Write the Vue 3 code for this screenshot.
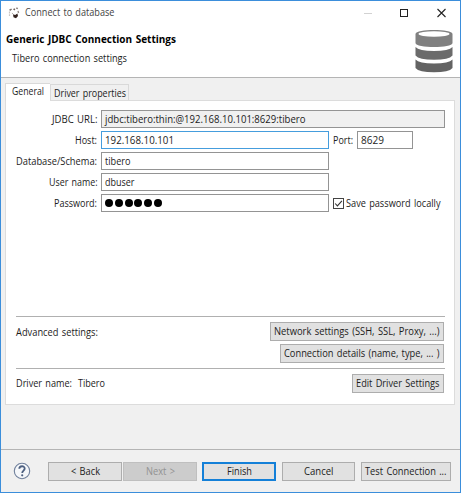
<script setup>
import { h, ref } from 'vue'

const url = 'jdbc:tibero:thin:@192.168.10.101:8629:tibero'
const host = '192.168.10.101'
const port = '8629'
const tab = ref('General')
const dots = 6

// Text label fitted to a fixed width; the baseline sits 11px below its top edge.
const Fit = (props) =>
  h('svg', { width: props.w, height: 15, class: 'fit' }, [
    h('text', { x: 0, y: 11, textLength: props.w, lengthAdjust: 'spacingAndGlyphs' }, props.t)
  ])
Fit.props = ['w', 't']
</script>

<template>
  <div class="window">
    <header class="head">
      <div class="titlebar">
        <svg class="app-icon" width="12" height="12" viewBox="0 0 12 12">
          <path d="M1.500 9V4.200" fill="none" stroke="#c9c4c2" stroke-width="1.200" stroke-dasharray="1.800 .8" />
          <path d="M1 2.800 3.200 1.600 4 2.400 2.200 4Z" fill="#7b706c" />
          <path d="M5 2.300 6.200 1.200 7.400 2.200 6.500 3.600Z" fill="#6a5d59" />
          <path d="M8 1.200 10 1.500M10 3.800 10.600 6" fill="none" stroke="#958a86" stroke-width="1.300" />
          <path d="M5 7.200 7.200 8 9.400 6.500 10 9 8 11.200 5.500 10.200Z" fill="#33221e" />
          <path d="M3.800 5.800 5 6.200 4.200 7.200Z" fill="#8d827e" />
        </svg>
        <Fit class="title" :w="89.5" t="Connect to database" />
        <svg class="controls" width="84" height="12" viewBox="0 0 84 12">
          <path d="M0 6.500H8" stroke="#d2d2d2" />
          <rect x="36.500" y="2.500" width="7" height="7" fill="none" stroke="#222" />
          <path d="M73.500 2 81.500 10M81.500 2 73.500 10" stroke="#222" stroke-width="1.100" />
        </svg>
      </div>
      <Fit class="heading" :w="170" t="Generic JDBC Connection Settings" />
      <Fit class="sub" :w="115" t="Tibero connection settings" />
      <svg class="db" width="38" height="44" viewBox="0 0 38 44">
        <path d="M.5 5C.5-.4 37.500-.4 37.500 5V14C37.500 19.400.5 19.400.5 14Z" fill="#808080" />
        <ellipse cx="19" cy="5" rx="15.500" ry="2.700" fill="#fff" />
        <path d="M.5 18Q4 22 19 22T37.500 18V26.500Q34 30.800 19 30.800T.5 26.500Z" fill="#6b6b6b" />
        <path d="M.5 30.500Q4 34.500 19 34.500T37.500 30.500V39Q34 43.300 19 43.300T.5 39Z" fill="#636363" />
      </svg>
    </header>

    <main class="body">
      <nav class="tabs">
        <button class="tab active"><Fit :w="32" :t="tab" /></button>
        <button class="tab other"><Fit :w="72" t="Driver properties" /></button>
      </nav>
      <section class="panel">
        <div class="form">
          <div class="row">
            <label><Fit :w="45.5" t="JDBC URL:" /></label>
            <div class="input wide"><Fit :w="200.5" :t="url" /></div>
          </div>
          <div class="row">
            <label><Fit :w="22" t="Host:" /></label>
            <div class="input focus"><Fit :w="69" :t="host" /></div>
            <Fit class="port" :w="20" t="Port:" />
            <div class="input small"><Fit :w="23" :t="port" /></div>
          </div>
          <div class="row">
            <label><Fit :w="81" t="Database/Schema:" /></label>
            <div class="input"><Fit :w="25.500" t="tibero" /></div>
          </div>
          <div class="row">
            <label><Fit :w="48.500" t="User name:" /></label>
            <div class="input"><Fit :w="29.500" t="dbuser" /></div>
          </div>
          <div class="row">
            <label><Fit :w="43" t="Password:" /></label>
            <div class="input dots"><i v-for="n in dots" :key="n"></i></div>
            <svg class="check" width="11" height="11" viewBox="0 0 11 11">
              <rect x=".5" y=".5" width="10" height="10" fill="#fff" stroke="#444" />
              <path d="M2.200 5.500 4.400 7.900 8.900 2.800" fill="none" stroke="#333" stroke-width="1.100" />
            </svg>
            <Fit class="save" :w="94.500" t="Save password locally" />
          </div>
        </div>
        <div class="advanced">
          <Fit class="l-adv" :w="82" t="Advanced settings:" />
          <div class="stack">
            <button class="btn net"><Fit :w="165.500" t="Network settings (SSH, SSL, Proxy, ...)" /></button>
            <button class="btn con"><Fit :w="155.500" t="Connection details (name, type, ... )" /></button>
          </div>
        </div>
        <div class="driver">
          <Fit :w="56" t="Driver name:" />
          <Fit class="tib" :w="27" t="Tibero" />
          <button class="btn edit"><Fit :w="83.500" t="Edit Driver Settings" /></button>
        </div>
      </section>
    </main>

    <footer class="foot">
      <svg class="help" width="18" height="18" viewBox="0 0 18 18">
        <circle cx="9" cy="9" r="7.700" fill="#f5f7fa" stroke="#70809c" stroke-width="1.100" />
        <path d="M6.300 6.800C6.300 3.400 11.800 3.500 11.700 6.600 11.600 8.500 9.200 8.700 9.200 11" fill="none" stroke="#4d6080" stroke-width="1.800" />
        <circle cx="9.200" cy="13.300" r="1.100" fill="#4d6080" />
      </svg>
      <button class="btn back"><Fit :w="29" t="&lt; Back" /></button>
      <button class="btn next"><Fit :w="29" t="Next &gt;" /></button>
      <button class="btn finish"><Fit :w="25" t="Finish" /></button>
      <button class="btn cancel"><Fit :w="29.500" t="Cancel" /></button>
      <button class="btn test"><Fit :w="81.500" t="Test Connection ..." /></button>
    </footer>
  </div>
</template>

<style>
body { overflow: hidden; background: #f0f0f0; }
.fit { display: block; flex: none; fill: currentColor; overflow: visible; word-spacing: 1px; }
</style>

<style scoped>
* { box-sizing: border-box; }
.window {
  width: 461px; height: 493px; border: 1px solid #3b8edb; background: #f0f0f0;
  display: flex; flex-direction: column; white-space: nowrap;
  font: 10.500px/14px "Open Sans", "Noto Sans", sans-serif; color: #1c1c1c;
}
button { font: inherit; color: inherit; padding: 0; margin: 0; display: flex; align-items: center; justify-content: center; }
.head { height: 77px; background: #fff; border-bottom: 1px solid #b4b4b4; position: relative; flex: none; }
.titlebar { display: flex; align-items: center; height: 22px; padding: 1px 12px 0 7px; }
.title { font-size: 11px; margin-left: 4.500px; color: #444; }
.controls { margin-left: auto; }
.heading { font-weight: 700; color: #000; font-size: 11px; margin: 9px 0 0 5px; }
.sub { margin: 4px 0 0 11px; }
.db { position: absolute; left: 414px; top: 28px; }
.body { flex: none; height: 372px; padding: 5px 5px 0 4px; border-bottom: 1px solid #b4b4b4; }
.tabs { display: flex; align-items: flex-end; height: 17px; }
.tab { height: 16px; width: 79px; border: 1px solid #d9d9d9; border-bottom: 0; background: #f0f0f0; }
.tab.other { padding-top: 2px; }
.tab.active { width: 45px; height: 18px; padding-bottom: 2px; background: #fff; border-right: 0; margin-bottom: -1px; z-index: 1; }
.panel { height: 305px; background: #fff; border: 1px solid #dcdcdc; padding: 9px 9px 0 10px; }
.form { height: 206px; display: flex; flex-direction: column; gap: 3px; }
.row { display: flex; align-items: center; height: 18px; }
.row label { width: 81px; margin-right: 4px; display: flex; justify-content: flex-end; flex: none; }
.input { width: 228px; height: 18px; border: 1px solid #949494; background: #fff; padding-left: 3px; display: flex; align-items: center; flex: none; }
.input.wide { width: 344px; background: #f0f0f0; }
.input.focus { border-color: #459ddd; }
.input.small { width: 56px; margin-left: 4px; }
.port { margin-left: 4px; }
.dots { gap: 1.800px; }
.dots i { width: 8px; height: 8px; border-radius: 50%; background: #000; }
.check { margin-left: 4px; }
.save { margin-left: 2px; }
.advanced { height: 52px; border-top: 1px solid #b0b0b0; display: flex; justify-content: space-between; padding-top: 5px; }
.l-adv { margin-top: 3px; }
.stack { display: flex; flex-direction: column; align-items: flex-end; gap: 3px; margin-right: 1px; }
.btn { height: 19px; background: #e1e1e1; border: 1px solid #adadad; flex: none; }
.net { width: 174px; }
.con { width: 164px; }
.driver { border-top: 1px solid #b0b0b0; display: flex; align-items: center; padding: 5px 1px 0 0; }
.tib { margin-left: 6px; }
.edit { width: 92px; margin-left: auto; height: 19px; }
.foot { flex: 1; display: flex; align-items: flex-start; padding: 12px 0 0 12px; }
.help { margin-right: 17px; }
.back, .next { width: 74px; }
.next { margin-left: 1px; background: #ccc; border-color: #bfbfbf; color: #929292; }
.finish { width: 74px; margin-left: 5px; border: 2px solid #1480d8; }
.cancel { width: 73px; margin-left: 6px; }
.test { width: 90px; margin-left: 6px; }
</style>
